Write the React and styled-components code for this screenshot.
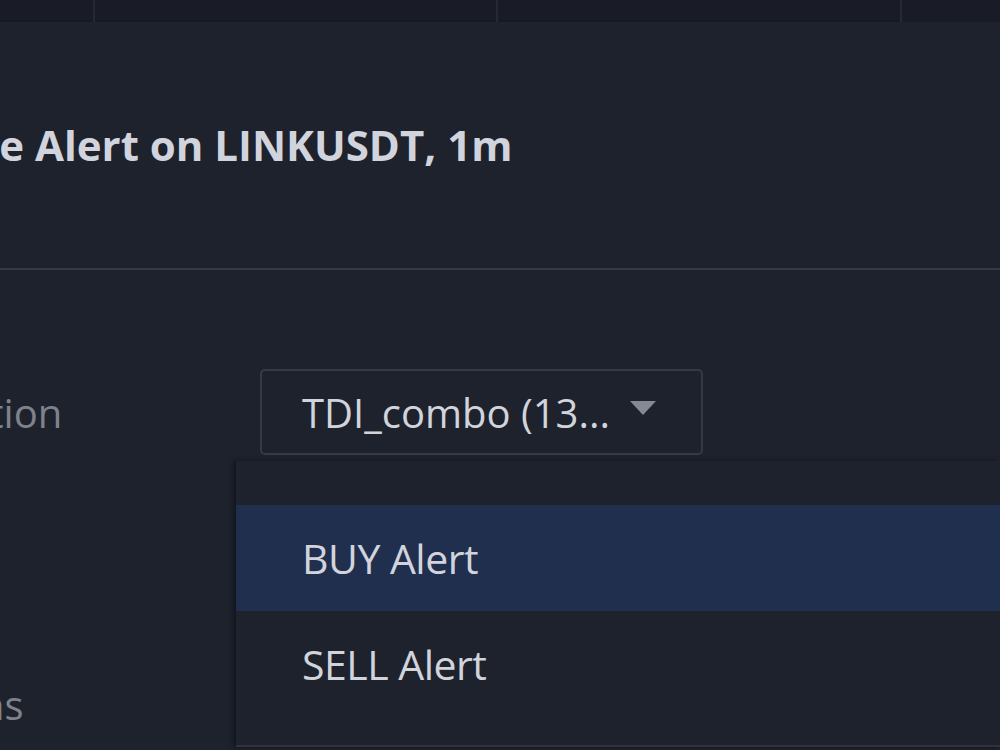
import React from "react";
import styled, { createGlobalStyle } from "styled-components";

const GlobalStyle = createGlobalStyle`
  html, body {
    margin: 0;
    padding: 0;
    background: #1e222d;
    overflow: hidden;
  }
  body {
    font-family: "Open Sans", "Noto Sans", sans-serif;
    color: #d1d4dc;
  }
`;

const Page = styled.div`
  width: 1000px;
  height: 750px;
  display: flex;
  flex-direction: column;
  background: #1e222d;
  overflow: hidden;
`;

const TopStrip = styled.div`
  height: 22px;
  display: flex;
  background: #191b26;
  flex-shrink: 0;
`;

const StripCell = styled.div`
  width: ${(p) => p.$w}px;
  flex-shrink: 0;
  border-right: ${(p) => (p.$last ? "none" : "2px solid #262934")};
  box-shadow: ${(p) => (p.$last ? "none" : "inset 0 -2px 0 #171922")};
`;

const Header = styled.div`
  height: 248px;
  display: flex;
  align-items: center;
  padding-bottom: 2px;
  box-sizing: border-box;
  border-bottom: 2px solid #363a46;
  flex-shrink: 0;
`;

const Title = styled.h1`
  margin: 0 0 0 -115px;
  font-size: 42px;
  font-weight: 700;
  color: #d1d4dc;
  white-space: nowrap;
`;

const Body = styled.div`
  padding-top: 99px;
  display: flex;
  flex-direction: column;
`;

const Row = styled.div`
  display: flex;
  align-items: center;
  height: ${(p) => p.$h || 86}px;
`;

const Label = styled.div`
  width: 260px;
  flex-shrink: 0;
  margin-left: ${(p) => p.$shift}px;
  padding-right: ${(p) => -p.$shift}px;
  font-size: 40px;
  color: #7f828c;
  white-space: nowrap;
`;

const SelectWrap = styled.div`
  position: relative;
`;

const Select = styled.div`
  width: 443px;
  height: 86px;
  box-sizing: border-box;
  border: 2px solid #363a45;
  border-radius: 5px;
  display: flex;
  align-items: center;
  padding-left: 40px;
  gap: 20px;
  font-size: 40px;
  color: #d1d4dc;
  white-space: nowrap;
`;

const Caret = styled.span`
  width: 0;
  height: 0;
  border-left: 13px solid transparent;
  border-right: 13px solid transparent;
  border-top: 14px solid #868993;
  margin-top: -8px;
`;

const Menu = styled.div`
  position: absolute;
  left: -24px;
  top: 92px;
  width: 764px;
  height: 286px;
  box-sizing: border-box;
  padding-top: 44px;
  background: #1e222d;
  box-shadow: -3px 0 4px rgba(10, 12, 18, 0.55);
  border-bottom: 2px solid #2f3340;
  z-index: 2;
`;

const MenuItem = styled.div`
  height: 106px;
  display: flex;
  align-items: center;
  padding-left: 66px;
  font-size: 41px;
  letter-spacing: -0.5px;
  color: #d1d4dc;
  background: ${(p) => (p.$active ? "#212f4f" : "transparent")};
`;

const Spacer = styled.div`
  height: ${(p) => p.$h}px;
`;

export default function App() {
  return (
    <Page>
      <GlobalStyle />
      <TopStrip>
        <StripCell $w={93} />
        <StripCell $w={401} />
        <StripCell $w={402} />
        <StripCell $w={98} $last />
      </TopStrip>
      <Header>
        <Title>Create Alert on LINKUSDT, 1m</Title>
      </Header>
      <Body>
        <Row>
          <Label $shift={-119}>Condition</Label>
          <SelectWrap>
            <Select>
              <span>TDI_combo (13...</span>
              <Caret />
            </Select>
            <Menu>
              <MenuItem $active>BUY Alert</MenuItem>
              <MenuItem>SELL Alert</MenuItem>
            </Menu>
          </SelectWrap>
        </Row>
        <Spacer $h={206} />
        <Row $h={86}>
          <Label $shift={-124}>Options</Label>
        </Row>
      </Body>
    </Page>
  );
}
